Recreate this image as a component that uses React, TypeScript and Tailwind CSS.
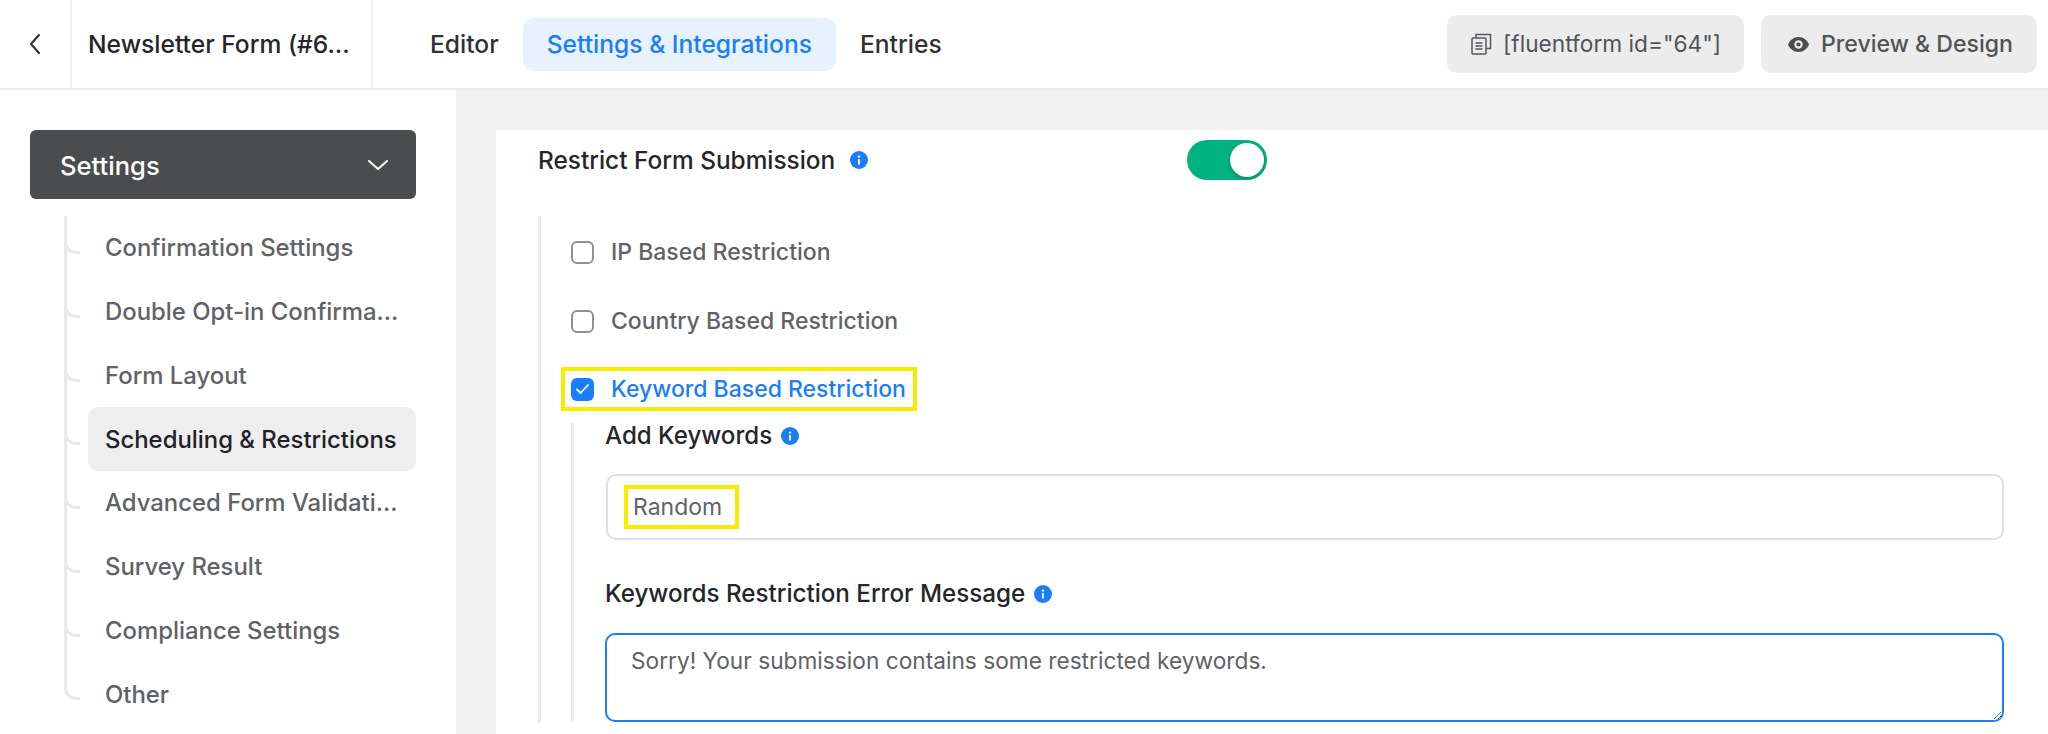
const menu = [
  'Confirmation Settings',
  'Double Opt-in Confirma...',
  'Form Layout',
  'Scheduling & Restrictions',
  'Advanced Form Validati...',
  'Survey Result',
  'Compliance Settings',
  'Other',
]

function InfoIcon() {
  return (
    <svg width="18" height="18" viewBox="0 0 18 18" className="shrink-0">
      <circle cx="9" cy="9" r="9" fill="#1a7efb" />
      <rect x="8" y="8" width="2" height="5.5" rx="0.6" fill="#fff" />
      <circle cx="9" cy="5.6" r="1.2" fill="#fff" />
    </svg>
  )
}

function Checkbox({ checked }: { checked?: boolean }) {
  if (checked) {
    return (
      <span className="w-[23px] h-[23px] rounded-[6px] bg-[#1a7efb] flex items-center justify-center shrink-0">
        <svg width="15" height="12" viewBox="0 0 15 12" fill="none" stroke="#fff" strokeWidth="1.8" strokeLinecap="round" strokeLinejoin="round">
          <path d="M2 6.5 5.6 10 13 2" />
        </svg>
      </span>
    )
  }
  return <span className="w-[23px] h-[23px] rounded-[6px] border-2 border-[#8f9194] bg-white shrink-0" />
}

export default function App() {
  return (
    <div className="w-[2048px] h-[734px] overflow-hidden bg-white flex flex-col font-['Inter','Liberation_Sans',sans-serif]">
      {/* Top bar */}
      <header className="h-[90px] shrink-0 flex items-stretch border-b-2 border-[#ececec]">
        <div className="w-[72px] border-r-2 border-[#f0f0f0] flex items-center pl-[28px]">
          <svg width="14" height="22" viewBox="0 0 14 22" fill="none" stroke="#2b2e33" strokeWidth="2" strokeLinecap="round" strokeLinejoin="round">
            <path d="M11 2 3 11l8 9" />
          </svg>
        </div>
        <div className="w-[301px] border-r-2 border-[#f0f0f0] flex items-center pl-[16px] text-[24.6px] font-medium text-[#24262a] whitespace-nowrap">
          Newsletter Form (#6...
        </div>
        <nav className="ml-[33px] flex items-center text-[24.6px] font-medium">
          <span className="px-[24px] h-[53px] flex items-center text-[#2f3135]">Editor</span>
          <span className="px-[24px] h-[53px] flex items-center text-[#1a7efb] bg-[#e8f2ff] rounded-[10px]">Settings &amp; Integrations</span>
          <span className="px-[24px] h-[53px] flex items-center text-[#2f3135]">Entries</span>
        </nav>
        <div className="ml-auto pr-[11px] flex items-center gap-[17px] text-[22.7px] text-[#515356]">
          <button className="w-[297px] h-[58px] rounded-[10px] bg-[#ececec] flex items-center pl-[24px] gap-[11px]">
            <svg width="21" height="22" viewBox="0 0 21 22" fill="none" stroke="#55575a" strokeWidth="1.5">
              <rect x="1" y="5" width="14" height="16" rx="1" />
              <path d="M5 5V1.5h14.5V15.5H15" />
              <path d="M4.5 10h7M4.5 13h7M4.5 16h7" strokeWidth="1.3" />
            </svg>
            <span>[fluentform id="64"]</span>
          </button>
          <button className="w-[276px] h-[58px] rounded-[10px] bg-[#ececec] flex items-center pl-[27px] gap-[12px] font-medium text-[23.1px]">
            <svg width="21" height="15" viewBox="0 0 21 15">
              <path d="M10.5 0C5.6 0 1.8 3.2 0 7.5 1.8 11.8 5.6 15 10.5 15S19.200 11.800 21 7.500C19.200 3.200 15.400 0 10.500 0Z" fill="#4b4d50" />
              <circle cx="10.500" cy="7.500" r="4.200" fill="#ececec" />
              <circle cx="10.500" cy="7.500" r="2.100" fill="#4b4d50" />
            </svg>
            <span>Preview &amp; Design</span>
          </button>
        </div>
      </header>

      <div className="flex-1 flex min-h-0">
        {/* Sidebar */}
        <aside className="w-[456px] shrink-0 pt-[40px] pl-[30px] pr-[40px]">
          <div className="h-[69px] rounded-[6px] bg-[#4b4c4d] flex items-center justify-between pl-[30px] pr-[27px] text-[25.6px] font-medium text-white">
            <span className="pt-[3px]">Settings</span>
            <svg width="22" height="12" viewBox="0 0 22 12" fill="none" stroke="#fff" strokeWidth="2" strokeLinecap="round" strokeLinejoin="round">
              <path d="M2 2l9 8 9-8" />
            </svg>
          </div>
          <ul className="relative mt-[17px] pl-[58px] text-[23.9px] font-medium text-[#606266]">
            <span className="absolute left-[34px] top-0 h-[467px] w-[3px] bg-[#e9e9e7]" />
            {menu.map((item, i) => (
              <li key={item} className="relative h-[63.75px] flex items-center">
                <span className="absolute left-[-24px] top-[21px] w-[16px] h-[17px] border-l-[3px] border-b-[3px] border-[#e9e9e7] rounded-bl-[12px]" />
                <span className={i === 3 ? 'w-full h-full flex items-center pl-[17px] pt-[1px] rounded-[10px] bg-[#eeeeee] text-[#1f2226]' : 'pl-[17px] pt-[1px]'}>
                  {item}
                </span>
              </li>
            ))}
          </ul>
        </aside>

        {/* Main */}
        <main className="flex-1 min-w-0 bg-[#f1f1f1] pt-[40px] pl-[40px]">
          <div className="h-full bg-white pt-[10px] pl-[42px] pr-[44px] text-[23px]">
            <div className="h-[40px] flex items-center">
              <div className="w-[649px] flex items-center gap-[15px] font-medium text-[24.4px] text-[#24262a]">
                <span>Restrict Form Submission</span>
                <InfoIcon />
              </div>
              <span className="relative w-[80px] h-[40px] rounded-full bg-[#00b27f]">
                <span className="absolute right-[3px] top-[3px] w-[34px] h-[34px] rounded-full bg-white shadow-[0_2px_4px_rgba(0,0,0,0.2)]" />
              </span>
            </div>

            <div className="mt-[36px] h-[507px] border-l-[3px] border-[#ebebeb] pl-[30px] pt-[14px] font-medium text-[#606266]">
              <label className="h-[44px] flex items-center gap-[17px]">
                <Checkbox />
                <span>IP Based Restriction</span>
              </label>
              <label className="mt-[25px] h-[44px] flex items-center gap-[17px]">
                <Checkbox />
                <span>Country Based Restriction</span>
              </label>
              <label className="mt-[24px] -ml-[10px] pl-[6px] w-[356px] h-[44px] border-4 border-[#f7eb00] flex items-center gap-[17px] text-[#1a7efb]">
                <Checkbox checked />
                <span className="whitespace-nowrap pt-[1px]">Keyword Based Restriction</span>
              </label>

              <div className="mt-[12px] h-[299px] border-l-[3px] border-[#ebebeb] pl-[31px]">
                <div className="h-[26px] flex items-center gap-[9px] text-[24.1px] text-[#24262a]">
                  <span>Add Keywords</span>
                  <InfoIcon />
                </div>
                <div className="mt-[25px] ml-[1px] h-[66px] rounded-[10px] border-2 border-[#dedede] flex items-center pl-[16px]">
                  <span className="h-[44px] w-[115px] border-4 border-[#f7eb00] flex items-center pl-[5px] font-normal text-[#606266]">Random</span>
                </div>
                <div className="mt-[41px] h-[26px] flex items-center gap-[9px] text-[24.2px] text-[#24262a]">
                  <span>Keywords Restriction Error Message</span>
                  <InfoIcon />
                </div>
                <textarea
                  readOnly
                  defaultValue="Sorry! Your submission contains some restricted keywords."
                  className="mt-[26px] block w-full h-[89px] rounded-[10px] border-2 border-[#1a7efb] pl-[24px] pt-[9px] text-[22.7px] font-normal text-[#606266] outline-none"
                />
              </div>
            </div>
          </div>
        </main>
      </div>
    </div>
  )
}
